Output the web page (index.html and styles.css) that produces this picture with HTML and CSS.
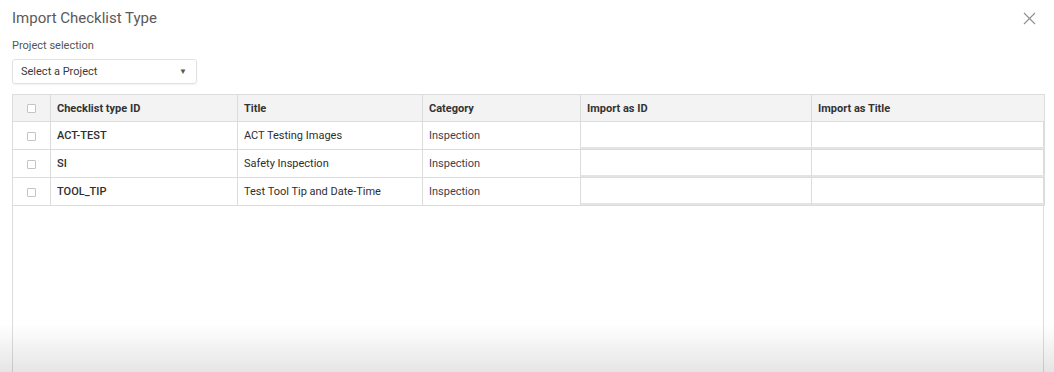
FILE: index.html
```html
<!DOCTYPE html>
<html>
<head>
<meta charset="utf-8">
<link rel="stylesheet" href="styles.css">
</head>
<body>
<div class="dialog">
  <div class="head">
    <h1 class="title">Import Checklist Type</h1>
    <svg class="close" width="13" height="13" viewBox="0 0 13 13"><path d="M1 1 L12 12 M12 1 L1 12" stroke="#8f8f8f" stroke-width="1.1" fill="none"/></svg>
  </div>
  <div class="label">Project selection</div>
  <div class="select"><span>Select a Project</span><span class="arrow">▼</span></div>
  <div class="grid">
    <table>
      <colgroup>
        <col class="c0"><col class="c1"><col class="c2"><col class="c3"><col class="c4"><col class="c5">
      </colgroup>
      <thead>
        <tr><th class="chk"><span class="box"></span></th><th>Checklist type ID</th><th>Title</th><th>Category</th><th>Import as ID</th><th>Import as Title</th></tr>
      </thead>
      <tbody>
        <tr><td class="chk"><span class="box"></span></td><td class="id">ACT-TEST</td><td>ACT Testing Images</td><td class="cat">Inspection</td><td class="inp"><div class="field"></div></td><td class="inp"><div class="field"></div></td></tr>
        <tr><td class="chk"><span class="box"></span></td><td class="id">SI</td><td>Safety Inspection</td><td class="cat">Inspection</td><td class="inp"><div class="field"></div></td><td class="inp"><div class="field"></div></td></tr>
        <tr><td class="chk"><span class="box"></span></td><td class="id">TOOL_TIP</td><td>Test Tool Tip and Date-Time</td><td class="cat">Inspection</td><td class="inp"><div class="field"></div></td><td class="inp"><div class="field"></div></td></tr>
      </tbody>
    </table>
  </div>
</div>
<div class="fade"></div>
</body>
</html>
```
FILE: styles.css
```css
html, body { margin: 0; padding: 0; background: #fff; overflow: hidden; }
body { width: 1054px; height: 372px; font-family: Roboto, "Liberation Sans", sans-serif; color: #333; }
.dialog { padding: 0 10px 0 12px; }
.head { display: flex; justify-content: space-between; align-items: flex-start; height: 38px; }
.title { margin: 9px 0 0; font-size: 15px; font-weight: 400; color: #5a5a5a; }
.close { margin: 12px 8px 0 0; }
.label { font-size: 11px; color: #555; height: 14px; margin-top: 1px; }
.select { width: 185px; height: 25px; box-sizing: border-box; margin-top: 6px; border: 1px solid #e2e2e2; border-radius: 3px; box-shadow: 0 1px 2px rgba(0,0,0,0.06); display: flex; align-items: center; justify-content: space-between; padding: 0 9px 0 8px; font-size: 11px; color: #3a3a3a; }
.arrow { font-size: 8px; color: #555; }
.grid { margin-top: 10px; width: 1032px; height: 278px; box-sizing: border-box; border: 1px solid #dcdcdc; border-top: none; border-bottom: none; }
table { border-collapse: collapse; width: 1032px; table-layout: fixed; margin-left: -1px; }
.c0 { width: 38px; } .c1 { width: 187px; } .c2 { width: 185px; } .c3 { width: 158px; } .c4 { width: 231px; } .c5 { width: 233px; }
th, td { border: 1px solid #dcdcdc; font-size: 11px; text-align: left; padding: 0 6px; }
th { background: #f3f3f3; height: 26px; font-weight: 700; color: #333; }
td { height: 27px; color: #2e2e2e; font-weight: 400; }
td.id { font-weight: 500; }
td.cat { color: #3c3f4f; }
.chk { text-align: center; padding: 0; }
.box { display: inline-block; width: 7px; height: 7px; border: 1px solid #c4c4c4; border-radius: 1px; vertical-align: middle; background: #fff; }
td.inp { padding: 0; }
.field { height: 26px; box-sizing: border-box; border-bottom: 2px solid #e4e4e4; margin: 0; }
.fade { position: absolute; left: 0; right: 0; bottom: 0; height: 48px; background: linear-gradient(rgba(0,0,0,0), rgba(0,0,0,0.1)); pointer-events: none; }
```
